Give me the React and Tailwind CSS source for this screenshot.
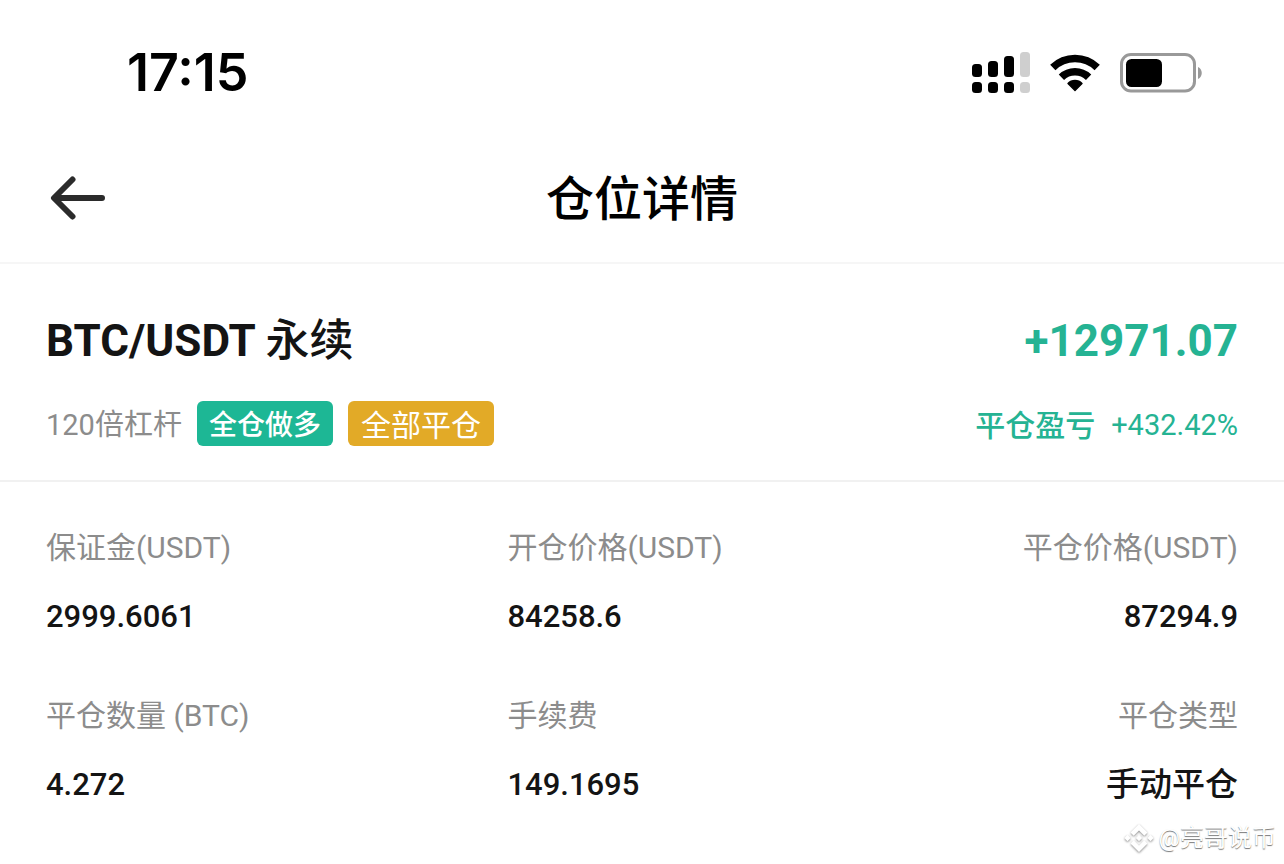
import React from 'react';

const metrics = [
  { label: '保证金(USDT)', value: '2999.6061' },
  { label: '开仓价格(USDT)', value: '84258.6' },
  { label: '平仓价格(USDT)', value: '87294.9' },
  { label: '平仓数量 (BTC)', value: '4.272' },
  { label: '手续费', value: '149.1695' },
  { label: '平仓类型', value: '手动平仓', cjk: true },
];

const SignalIcon = () => (
  <svg width="58" height="42" viewBox="0 0 58 42" aria-hidden="true">
    <g fill="#000">
      <rect x="0" y="12" width="10" height="13" rx="3.5" />
      <rect x="16" y="9" width="10" height="16" rx="3.5" />
      <rect x="32" y="4" width="10" height="21" rx="3.5" />
      <rect x="0" y="30" width="10" height="11" rx="3.5" />
      <rect x="16" y="30" width="10" height="11" rx="3.5" />
      <rect x="32" y="30" width="10" height="11" rx="3.5" />
    </g>
    <g fill="#cfcfcf">
      <rect x="48" y="0" width="10" height="25" rx="3.5" />
      <rect x="48" y="30" width="10" height="11" rx="3.5" />
    </g>
  </svg>
);

const WifiIcon = () => (
  <svg width="50" height="38" viewBox="0 0 50 38" aria-hidden="true">
    <g fill="none" stroke="#000" strokeWidth="7.6">
      <path d="M2.8 13.4A32 32 0 0 1 47.2 13.4" />
      <path d="M11.4 23.2A19.6 19.6 0 0 1 38.6 23.2" />
    </g>
    <path
      d="M25 36.6L18 29.6A9.6 9.6 0 0 1 32 29.6Z"
      fill="#000"
      stroke="#000"
      strokeWidth="1.4"
      strokeLinejoin="round"
    />
  </svg>
);

const BatteryIcon = () => (
  <svg width="82" height="40" viewBox="0 0 82 40" aria-hidden="true">
    <rect x="1.5" y="1.5" width="73" height="36.5" rx="9.5" fill="#fff" stroke="#999" strokeWidth="3" />
    <rect x="6" y="6" width="36" height="28" rx="5.5" fill="#000" />
    <path d="M78 14C83 16 83 24 78 26Z" fill="#999" />
  </svg>
);

const BackIcon = () => (
  <svg width="56" height="44" viewBox="0 0 56 44" fill="none" aria-hidden="true">
    <path
      d="M22.5 3.5L4 22L22.5 40.5M5 22H52"
      stroke="#2b2b2b"
      strokeWidth="6"
      strokeLinecap="round"
      strokeLinejoin="round"
    />
  </svg>
);

const StatusBar = () => (
  <div className="flex h-[134px] items-center justify-between pt-3 pr-[82px] pl-[127px]">
    <span className="font-['Inter',sans-serif] text-[52px] leading-none font-semibold text-black">
      17:15
    </span>
    <div className="flex items-center gap-5">
      <SignalIcon />
      <WifiIcon />
      <BatteryIcon />
    </div>
  </div>
);

const Header = () => (
  <header className="grid h-[130px] grid-cols-[1fr_auto_1fr] items-center border-b-2 border-[#f6f6f6] px-[50px]">
    <button type="button" aria-label="返回" className="justify-self-start">
      <BackIcon />
    </button>
    <h1 className="pt-1 text-[48px] leading-none font-medium text-black">仓位详情</h1>
  </header>
);

const PositionSummary = () => (
  <section className="flex justify-between border-b-2 border-[#f1f1f1] px-[46px] pt-[47px] pb-[34px]">
    <div>
      <h2 className="text-[44px] leading-[60px] font-bold text-[#141414]">
        BTC/USDT <span className="font-medium">永续</span>
      </h2>
      <div className="mt-[30px] flex h-[45px] items-center">
        <span className="pt-1 text-[29px] leading-none text-[#8c8c8c]">120倍杠杆</span>
        <span className="ml-[15px] flex h-[45px] items-center rounded-md bg-[#1db795] px-3 pt-1 text-[28px] font-medium text-white">
          全仓做多
        </span>
        <span className="ml-[15px] flex h-[45px] items-center rounded-md bg-[#e2aa27] px-[13px] pt-1 text-[30px] text-white">
          全部平仓
        </span>
      </div>
    </div>
    <div className="text-right text-[#25b393]">
      <p className="text-[44px] leading-[60px] font-bold">+12971.07</p>
      <p className="mt-[30px] flex h-[45px] items-center justify-end gap-4 pt-1">
        <span className="text-[30px] font-medium">平仓盈亏</span>
        <span className="text-[29px]">+432.42%</span>
      </p>
    </div>
  </section>
);

const Metric = ({ label, value, cjk }) => (
  <div className="nth-[3n]:text-right">
    <dt className="text-[30px] leading-10 text-[#8c8c8c]">{label}</dt>
    <dd
      className={`mt-[29px] leading-10 font-medium text-[#141414] ${cjk ? 'text-[33px]' : 'text-[31px]'}`}
    >
      {value}
    </dd>
  </div>
);

const Watermark = () => (
  <div className="absolute right-2 bottom-[10px] flex items-center gap-1 text-white">
    <svg
      width="30"
      height="30"
      viewBox="0 0 30 30"
      fill="#fff"
      className="drop-shadow-[0_1px_1px_#888888]"
      aria-hidden="true"
    >
      <path d="M15 1L23.5 9.5L20.3 12.7L15 7.4L9.7 12.7L6.5 9.5Z" />
      <path d="M15 29L6.5 20.5L9.7 17.3L15 22.6L20.3 17.3L23.5 20.5Z" />
      <path d="M3.5 11.8L6.7 15L3.5 18.2L0.3 15Z" />
      <path d="M26.5 11.8L29.7 15L26.5 18.2L23.3 15Z" />
      <path d="M15 11.8L18.2 15L15 18.2L11.8 15Z" />
    </svg>
    <span className="text-[24px] leading-8 text-shadow-[0_1px_1px_#777777]">@亮哥说币</span>
  </div>
);

const App = () => (
  <main className="relative min-h-screen overflow-hidden bg-white font-['Roboto','Noto_Sans_CJK_SC',sans-serif]">
    <StatusBar />
    <Header />
    <PositionSummary />
    <dl className="grid grid-cols-[12fr_10fr_9fr] gap-y-[59px] px-[46px] pt-[46px] pb-12">
      {metrics.map((metric) => (
        <Metric key={metric.label} {...metric} />
      ))}
    </dl>
    <Watermark />
  </main>
);

export default App;
